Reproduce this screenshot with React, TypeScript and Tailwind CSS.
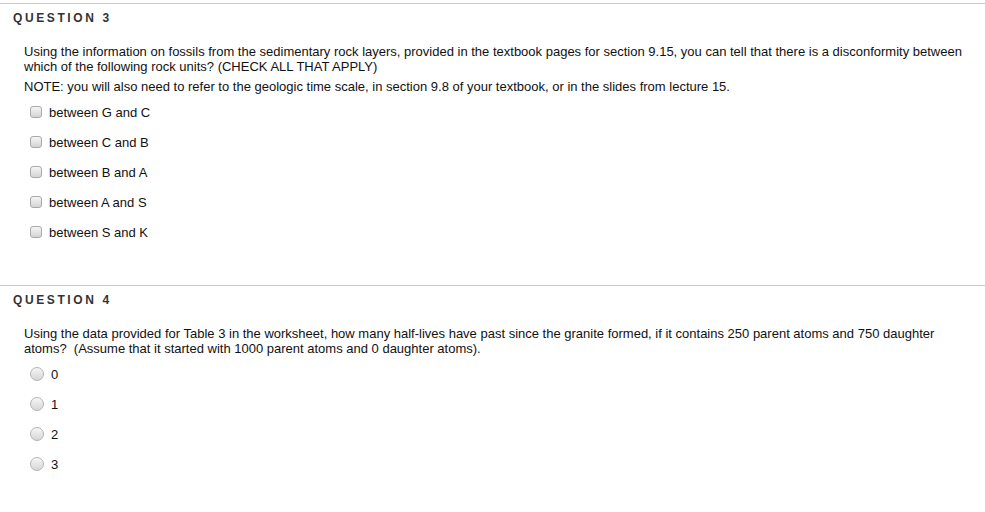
import React from 'react'

const Checkbox = () => (
    <span className="inline-block w-[12px] h-[12px] rounded-[3px] border border-[#a9a9a9] bg-gradient-to-b from-[#f6f6f6] to-[#d4d4d4] shrink-0" />
)

const Radio = () => (
    <span className="inline-block w-[14px] h-[14px] rounded-full border border-[#b4b4b4] bg-gradient-to-b from-[#f6f6f6] to-[#d6d6d6] shrink-0" />
)

const q3Options = ['between G and C', 'between C and B', 'between B and A', 'between A and S', 'between S and K']
const q4Options = ['0', '1', '2', '3']

const App = () => {
    return (
        <div className="w-[985px] h-[512px] bg-white text-[#111] font-['Liberation_Sans',Arial,sans-serif] overflow-hidden">
            <div className="pt-[3px]">
                <div className="border-t border-[#cccccc]">
                    <h2 className="pl-[13px] pt-[6px] text-[12px] font-bold tracking-[2.6px] text-[#333333] leading-[16px]">QUESTION 3</h2>
                    <div className="pl-[24px] pr-[20px] pt-[18px] text-[13px] leading-[15px]">
                        <p>Using the information on fossils from the sedimentary rock layers, provided in the textbook pages for section 9.15, you can tell that there is a disconformity between which of the following rock units? (CHECK ALL THAT APPLY)</p>
                        <p className="mt-[5px]">NOTE: you will also need to refer to the geologic time scale, in section 9.8 of your textbook, or in the slides from lecture 15.</p>
                    </div>
                    <ul className="pl-[30px] pt-[3px] text-[13px] leading-[15px]">
                        {q3Options.map((o) => (
                            <li key={o} className="flex items-center gap-[7px] h-[30px]">
                                <Checkbox />
                                <span>{o}</span>
                            </li>
                        ))}
                    </ul>
                </div>
            </div>
            <div className="mt-[38px] border-t border-[#cccccc]">
                <h2 className="pl-[13px] pt-[6px] text-[12px] font-bold tracking-[2.6px] text-[#333333] leading-[16px]">QUESTION 4</h2>
                <div className="pl-[24px] pr-[20px] pt-[18px] text-[13px] leading-[15px]">
                    <p>Using the data provided for Table 3 in the worksheet, how many half-lives have past since the granite formed, if it contains 250 parent atoms and 750 daughter atoms? &nbsp;(Assume that it started with 1000 parent atoms and 0 daughter atoms).</p>
                </div>
                <ul className="pl-[30px] pt-[3px] text-[13px] leading-[15px]">
                    {q4Options.map((o) => (
                        <li key={o} className="flex items-center gap-[7px] h-[30px]">
                            <Radio />
                            <span>{o}</span>
                        </li>
                    ))}
                </ul>
            </div>
        </div>
    )
}

export default App
